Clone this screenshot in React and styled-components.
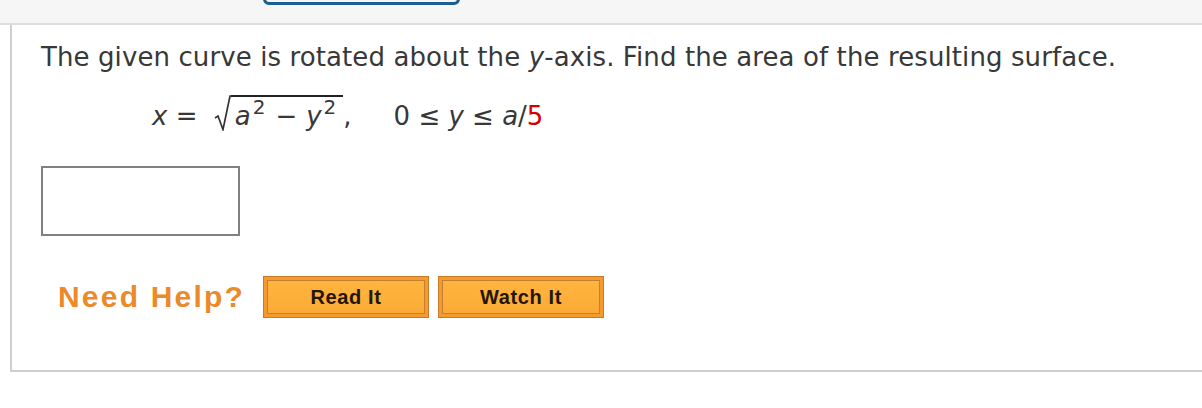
import React from "react";
import styled, { createGlobalStyle } from "styled-components";

const Global = createGlobalStyle`
  html, body {
    margin: 0;
    padding: 0;
    background: #ffffff;
  }
  body {
    font-family: "DejaVu Sans", Verdana, sans-serif;
    color: #383838;
  }
`;

const TopBar = styled.div`
  height: 23px;
  background: #f6f6f6;
  border-bottom: 2px solid #dedede;
  overflow: hidden;
  display: flex;
`;

const Tab = styled.div`
  margin-left: 263px;
  margin-top: -22px;
  width: 191px;
  height: 21px;
  border: 3px solid #1b5f8e;
  border-radius: 6px;
`;

const Panel = styled.div`
  margin-left: 10px;
  border-left: 2px solid #cfcfcf;
  border-bottom: 2px solid #cfcfcf;
  padding: 16px 0 52px 29px;
`;

const Question = styled.p`
  margin: 0;
  font-size: 26px;
  line-height: 32px;
  letter-spacing: 0.1px;
  white-space: nowrap;
`;

const Equation = styled.div`
  margin: 22px 0 0 111px;
  font-size: 26px;
  line-height: 34px;
  height: 34px;
  white-space: nowrap;
`;

const Var = styled.i`
  font-style: italic;
`;

const Sup = styled.sup`
  font-size: 20px;
  line-height: 0;
  vertical-align: 11px;
  margin-left: 2px;
`;

const Gap = styled.span`
  display: inline-block;
  width: ${(p) => p.w}px;
`;

const Radicand = styled.span`
  display: inline-block;
  border-top: 2px solid #222;
  padding: 6px 7px 0 4px;
  line-height: 26px;
`;

const Red = styled.span`
  color: #d40000;
`;

const AnswerBox = styled.input`
  display: block;
  box-sizing: border-box;
  width: 199px;
  height: 70px;
  margin-top: 37px;
  border: 2px solid #808080;
  background: #fff;
  outline: none;
`;

const HelpRow = styled.div`
  display: flex;
  align-items: center;
  margin-top: 40px;
  margin-left: 17px;
  gap: 9px;
`;

const HelpLabel = styled.span`
  font-family: "Liberation Sans", Arial, sans-serif;
  font-weight: bold;
  font-size: 30px;
  color: #ea8a2a;
  margin-right: 9px;
  letter-spacing: 2.2px;
`;

const HelpButton = styled.button`
  box-sizing: border-box;
  width: 166px;
  height: 42px;
  padding: 3px;
  border: 1px solid #c87a2a;
  background: #f59a2c;
  cursor: pointer;
  display: flex;
`;

const HelpInner = styled.span`
  flex: 1;
  display: flex;
  align-items: center;
  justify-content: center;
  border: 1px solid #c5802f;
  background: linear-gradient(#ffb53f, #fcaa36);
  font-family: "Liberation Sans", Arial, sans-serif;
  font-weight: bold;
  font-size: 20px;
  color: #241603;
  letter-spacing: 0.6px;
`;

const RadicalSign = () => (
  <svg
    width="17"
    height="36"
    viewBox="0 0 17 36"
    style={{ verticalAlign: "-6px", marginLeft: "8px" }}
  >
    <path
      d="M1 23 L4 21 L9 34.5 L16 1 L17 1"
      fill="none"
      stroke="#333"
      strokeWidth="1.7"
    />
  </svg>
);

export default function App() {
  return (
    <>
      <Global />
      <TopBar>
        <Tab />
      </TopBar>
      <Panel>
        <Question>
          The given curve is rotated about the <Var>y</Var>-axis. Find the area of the resulting surface.
        </Question>
        <Equation>
          <Var>x</Var> = <RadicalSign />
          <Radicand>
            <Var>a</Var>
            <Sup>2</Sup>
            <Gap w={10} />−<Gap w={9} />
            <Var>y</Var>
            <Sup>2</Sup>
          </Radicand>
          ,<Gap w={42} />0 ≤ <Var>y</Var> ≤ <Var>a</Var>/<Red>5</Red>
        </Equation>
        <AnswerBox type="text" />
        <HelpRow>
          <HelpLabel>Need Help?</HelpLabel>
          <HelpButton>
            <HelpInner>Read It</HelpInner>
          </HelpButton>
          <HelpButton>
            <HelpInner>Watch It</HelpInner>
          </HelpButton>
        </HelpRow>
      </Panel>
    </>
  );
}
